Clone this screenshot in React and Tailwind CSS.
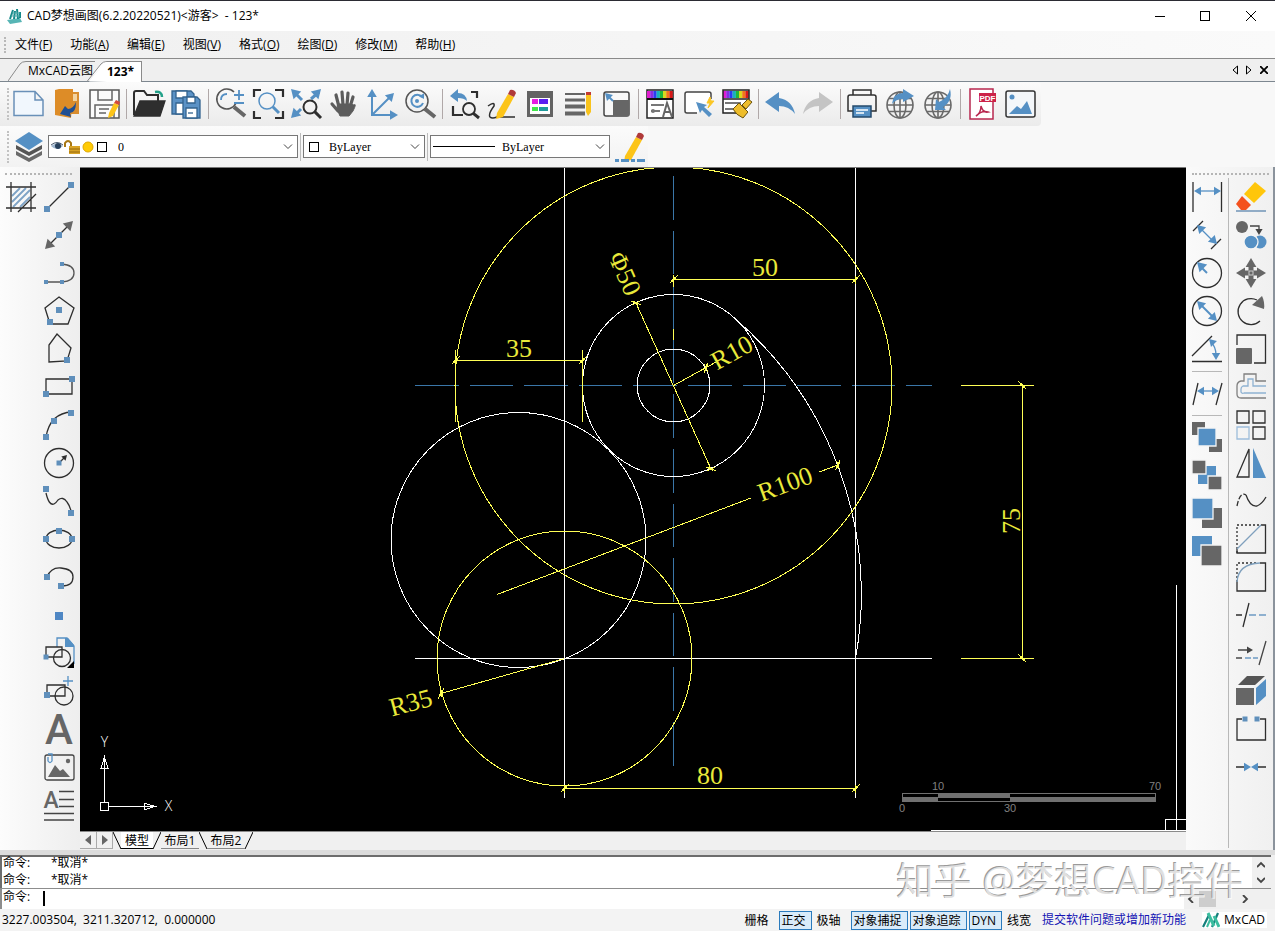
import React from 'react';

const BLUE = '#5590c4';
const GRAY = '#666666';
const DARK = '#2e2e2e';

// Arrow head with its tip on (x, y), turned by a degrees (0 = right)
const Head = ({ x, y, a = 0, s = 6, c = BLUE }) => (
  <path d={`M0 0L${-s} ${-s * 0.6}V${s * 0.6}Z`} fill={c} stroke="none" transform={`translate(${x} ${y}) rotate(${a})`} />
);

// Small square node
const Node = ({ x, y, s = 6, c = '#5f8fbb' }) => (
  <rect x={x - s / 2} y={y - s / 2} width={s} height={s} fill={c} stroke="none" />
);

const Glass = ({ x, y, r, hx, hy, c = DARK, hc = c, w = 1.5, hw = 3 }) => (
  <>
    <circle cx={x} cy={y} r={r} stroke={c} strokeWidth={w} />
    <path d={`M${x + r * 0.72} ${y + r * 0.72}L${hx} ${hy}`} stroke={hc} strokeWidth={hw} />
  </>
);

const Pencil = () => (
  <g stroke="none">
    <path d="M21 5L27 8L16 28L9 30L10 24Z" fill="#fcc419" />
    <path d="M21 5L23 1Q27 0 29 4L27 8Z" fill="#b03a3a" />
  </g>
);

const Spectrum = () => (
  <g stroke="none">
    {['#e01fd0', '#8a2be2', '#2b3cf0', '#18b0c0', '#1fb83a', '#d8d820', '#f07818', '#d81818'].map((c, i) => (
      <rect key={c} x={2 + i * 3.2} y="2" width="3.3" height="7" fill={c} />
    ))}
  </g>
);

const Globe = () => (
  <g stroke="#6a6a6a" strokeWidth="1.6">
    <circle cx="15" cy="16" r="13" />
    <ellipse cx="15" cy="16" rx="6" ry="13" />
    <path d="M15 3V29M2 16H28M4 9.500H26M4 22.500H26" />
  </g>
);

const icons = {
  blank: (
    <path d="M1 2.500H22L30 11V26.500H1ZM22 2.500V11H30" fill="#f1f7fd" stroke="#6990b8" strokeWidth="1.500" />
  ),
  open: (
    <g stroke="none">
      <path d="M20 3H28V25H20Z" fill="#d98d2e" />
      <path d="M22 5H26V12H22Z" fill="#f3d3a0" />
      <path d="M4 1L8 0H22V4L20 29L4 26Z" fill="#dd8c27" />
      <path d="M9 25L14 17L17 20Q22 20 25 13Q25 24 19 24L20 28Z" fill="#1f4f93" />
    </g>
  ),
  save: (
    <>
      <path d="M1 1H30V29H1Z" fill="#fbfbfb" stroke="#555" strokeWidth="1.500" />
      <path d="M9 1V11H23V1M6 29V16H25V29M10 20H20M10 24H17" stroke="#666" strokeWidth="1.500" />
      <path d="M25 14L30 16L24 27L19 29L20 24Z" fill="#fcc419" stroke="none" />
      <path d="M25 14L27 11L31 13L30 16Z" fill="#d34a3a" stroke="none" />
    </>
  ),
  folder: (
    <>
      <path d="M1 26V4Q1 2 3 2H11L14 6H25V12" stroke={DARK} strokeWidth="2" />
      <path d="M1 27L7 12H32L27 27Z" fill={DARK} stroke={DARK} />
      <path d="M22 3Q29 2 29 8" stroke="#23a28a" strokeWidth="2.500" />
    </>
  ),
  saveAll: (
    <>
      <path d="M1 2H20L23 5V25H1Z" fill="#5b92c6" stroke="#33638f" />
      <path d="M5 2H16V9H5ZM5 14H18V25H5Z" fill="#fff" stroke="#33638f" />
      <path d="M12 8H26L29 11V29H12Z" fill="#5b92c6" stroke="#33638f" />
      <path d="M16 8H24V14H16ZM15 19H26V29H15Z" fill="#fff" stroke="#33638f" />
      <path d="M17 24H22" stroke="#33638f" />
    </>
  ),
  zoomPm: (
    <>
      <path d="M19 3A10 10 0 1 0 21 14" stroke="#555" strokeWidth="1.600" />
      <path d="M19 18L30 27" stroke={GRAY} strokeWidth="4" />
      <path d="M24 1V11M19 6H29M19 14H29M6 11Q6 5 12 5" stroke={BLUE} strokeWidth="1.800" />
    </>
  ),
  zoomWin: (
    <>
      <path d="M1 8V1H8M22 1H30V8M30 22V29H22M8 29H1V22" stroke={DARK} strokeWidth="2.200" />
      <Glass x={14} y={12} r={8} hx={26} hy={24} c={BLUE} />
    </>
  ),
  zoomAll: (
    <>
      <path d="M3 3L11 11M28 3L20 10M3 27L10 20" stroke={BLUE} strokeWidth="3" />
      <Head x={0} y={0} a={225} s={9} />
      <Head x={30} y={0} a={315} s={9} />
      <Head x={0} y={29} a={135} s={9} />
      <Glass x={19} y={18} r={6.5} hx={30} hy={29} w={2} />
    </>
  ),
  hand: (
    <g stroke="#5c5c5c" strokeLinecap="round" strokeWidth="3.200">
      <path d="M7 6L10 18M13 3L14 16M19 4L18 16M24 8L21 18M3 15L9 22" />
      <path d="M9 15H21L25 16Q28 14 24 22L20 27H11L8 20Z" fill="#5c5c5c" strokeWidth="1" />
    </g>
  ),
  axes: (
    <>
      <path d="M5 4V26H27M5 26L24 7" stroke={BLUE} strokeWidth="2" />
      <Head x={5} y={0} a={270} s={8} />
      <Head x={31} y={26} s={8} />
      <Head x={27} y={4} a={315} s={8} />
    </>
  ),
  zoomRot: (
    <>
      <Glass x={12} y={12} r={11} hx={30} hy={28} c="#555" hc={GRAY} hw={4} />
      <path d="M17 8A6 6 0 1 0 18 14" stroke={BLUE} strokeWidth="2" />
      <circle cx="12" cy="12" r="2" fill={BLUE} stroke="none" />
      <Head x={19} y={10} a={60} s={5} />
    </>
  ),
  zoomPrev: (
    <>
      <path d="M1 7L9 0V4Q17 4 18 12Q15 9 9 9V13Z" fill={BLUE} stroke="none" />
      <path d="M22 3H28V9M4 17V26H14" stroke={DARK} strokeWidth="2.200" />
      <Glass x={20} y={20} r={6} hx={30} hy={29} w={1.8} />
    </>
  ),
  draw: (
    <>
      <path d="M1 17Q8 12 7 17Q1 25 3 28Q5 30 10 28H28" stroke={DARK} strokeWidth="1.500" />
      <Pencil />
    </>
  ),
  palette: (
    <g stroke="none">
      <rect x="2" y="2" width="26" height="26" fill="#636363" />
      <rect x="5" y="9" width="20" height="16" fill="#fff" />
      <path d="M7 10H13V15H7Z" fill="#e61fe0" />
      <path d="M14 10H23V15H14Z" fill="#5a1ff0" />
      <path d="M7 18H13V22H7Z" fill="#42e84a" />
      <path d="M14 18H23V22H14Z" fill="#1f9c9c" />
    </g>
  ),
  lines: (
    <>
      <path d="M2 5H22" stroke={GRAY} strokeWidth="2" />
      <path d="M2 11H22" stroke={GRAY} strokeWidth="3" />
      <path d="M2 17.500H22M2 24.500H22" stroke={GRAY} strokeWidth="4" />
      <path d="M23 6H28V23L25 27L23 23Z" fill="#f9c31c" stroke="none" />
      <path d="M23 3H28V6H23Z" fill="#c23a32" stroke="none" />
    </>
  ),
  corner: (
    <>
      <rect x="3" y="3" width="25" height="24" rx="2" fill="#f8f8f8" stroke="#444" strokeWidth="1.500" />
      <path d="M12 11H28V27H12Z" fill={GRAY} stroke="none" />
      <path d="M12 12L6 6" stroke={BLUE} strokeWidth="2" />
      <Head x={4} y={4} a={225} s={7} />
    </>
  ),
  textStyle: (
    <>
      <rect x="2" y="1" width="26" height="28" fill="#fff" stroke="#222" strokeWidth="1.500" />
      <Spectrum />
      <path d="M2 10H28" stroke="#111" strokeWidth="2" />
      <path d="M6 16H19M6 22H15" stroke="#777" strokeWidth="2" />
      <circle cx="8" cy="22" r="2" fill="#777" stroke="none" />
      <path d="M18 28L22 14L27 28M19 23H26" stroke={GRAY} strokeWidth="2" />
    </>
  ),
  pick: (
    <>
      <path d="M28 10V5Q28 3 26 3H4Q2 3 2 5V22Q2 24 4 24H14" fill="#fff" stroke="#444" strokeWidth="1.500" />
      <path d="M13 13L24 16L21 18L29 25L26 28L19 21L17 24Z" fill={BLUE} stroke="none" />
      <path d="M27 8L24 14H27L25 19L31 12H28Z" fill="#fbc624" stroke="#fbc624" strokeWidth="1" />
    </>
  ),
  match: (
    <>
      <rect x="2" y="2" width="26" height="22" fill="#fff" stroke="none" />
      <Spectrum />
      <path d="M16 24H2V1H28V14M2 10H28" stroke="#222" strokeWidth="1.500" />
      <path d="M4 14H20M4 20H14" stroke="#777" strokeWidth="2" />
      <path d="M12 20L18 14L27 23L22 29Q15 26 12 20Z" fill="#eebd2b" stroke="#6b5410" strokeWidth="1" />
      <path d="M21 16L27 10L31 13L25 20Z" fill="#eebd2b" stroke="#6b5410" strokeWidth="1" />
    </>
  ),
  undo: <path d="M0 13L14 3V9Q27 11 30 25Q24 17 14 17V23Z" fill={BLUE} stroke="none" />,
  redo: <path d="M30 13L16 3V9Q3 11 0 25Q6 17 16 17V23Z" fill="#c4c4c4" stroke="none" />,
  print: (
    <>
      <path d="M6 6V1H24V6M6 22H1V8Q1 6 3 6H27Q29 6 29 8V22H24" stroke={DARK} strokeWidth="1.500" />
      <rect x="6" y="17" width="18" height="11" fill={BLUE} stroke="#24496b" strokeWidth="1.500" />
      <path d="M9 21H21M9 24H17" stroke="#fff" strokeWidth="1.500" />
    </>
  ),
  globeOut: (
    <>
      <Globe />
      <path d="M7 15Q8 4 18 4V0L29 7L18 13V10Q11 10 7 15Z" fill={BLUE} stroke="none" />
    </>
  ),
  globeIn: (
    <>
      <Globe />
      <path d="M27 0Q30 12 20 18L23 21L12 21L13 10L16 13Q25 9 27 0Z" fill={BLUE} stroke="none" />
    </>
  ),
  pdf: (
    <>
      <rect x="3" y="0" width="23" height="30" fill="#fff" stroke="#b8274f" strokeWidth="1.500" />
      <rect x="12" y="4" width="17" height="9" fill="#cc2248" stroke="none" />
      <text x="20.500" y="11.500" textAnchor="middle" fontSize="8" fontWeight="700" fill="#fff" stroke="none">PDF</text>
      <path d="M9 27Q14 24 14 17Q16 24 21 23Q15 21 9 27Z" stroke="#b8274f" strokeWidth="1.500" />
    </>
  ),
  picture: (
    <>
      <rect x="1" y="2" width="29" height="26" rx="2" fill="#f4f7fa" stroke="#333" strokeWidth="1.500" />
      <circle cx="7" cy="8" r="2.500" fill={BLUE} stroke="none" />
      <path d="M4 25L12 17L16 20L22 12L27 25Z" fill={BLUE} stroke="none" />
    </>
  ),
  layers: (
    <g stroke="none">
      <path d="M2 19L15 26L28 19V23L15 30L2 23Z" fill="#6a6a6a" />
      <path d="M2 13L15 20L28 13V17L15 24L2 17Z" fill="#555" />
      <path d="M15 0L29 9L15 18L1 9Z" fill={BLUE} />
    </g>
  ),
  lineEdit: (
    <>
      <Pencil />
      <path d="M0 28.500H32" stroke={BLUE} strokeWidth="3" strokeDasharray="4 2 8 2" />
    </>
  ),
  hatch: (
    <>
      <g stroke="#7ea3c6" strokeWidth="1.800">
        <path d="M6 14L14 6M6 20L20 6M7 25L24 8M14 25L24 15" />
      </g>
      <path d="M0 5H30M0 26H30M5 0V30M25 0V30M12 30L30 12" />
    </>
  ),
  line: (
    <>
      <path d="M3 27L27 3" />
      <Node x={3} y={27} />
      <Node x={27} y={3} />
    </>
  ),
  xline: (
    <>
      <path d="M4 26L26 4" />
      <Head x={1} y={29} a={135} s={9} c={GRAY} />
      <Head x={29} y={1} a={315} s={9} c={GRAY} />
      <Node x={15} y={15} />
    </>
  ),
  pline: (
    <>
      <path d="M2 24H18Q30 23 30 15T18 6" stroke="#555" />
      <path d="M5 24H15" stroke="#f4f4f4" strokeWidth="2" strokeDasharray="0 1" />
      <Node x={2} y={24} s={4} />
      <Node x={18} y={24} s={4} />
      <Node x={18} y={6} s={4} />
    </>
  ),
  polygon: (
    <>
      <path d="M15 1L30 12L24 28H6L1 12Z" />
      <Node x={15} y={14} />
      <Node x={6} y={26} />
    </>
  ),
  wire: (
    <>
      <path d="M13 0L27 14L23 27L5 28V11Z" />
      <Node x={23} y={26} />
    </>
  ),
  rect: (
    <>
      <path d="M2 7H28V22H2Z" />
      <Node x={28} y={7} />
      <Node x={2} y={22} />
    </>
  ),
  arc: (
    <>
      <path d="M2 27Q6 3 28 2" />
      <Node x={2} y={27} />
      <Node x={10} y={11} />
      <Node x={27} y={3} />
    </>
  ),
  circle: (
    <>
      <circle cx="15" cy="15" r="14.500" />
      <path d="M15 15L20 10" />
      <Head x={23} y={7} a={315} s={5} c={DARK} />
      <Node x={15} y={15} s={5} />
    </>
  ),
  spline: (
    <>
      <path d="M2 7Q5 20 10 18Q12 17 14 14Q19 10 23 16Q26 20 27 25" />
      <Node x={2} y={3} />
      <Node x={27} y={27} />
    </>
  ),
  ellipse: (
    <>
      <ellipse cx="15" cy="15" rx="13" ry="9" />
      <Node x={2} y={15} />
      <Node x={28} y={15} />
      <Node x={15} y={7} />
    </>
  ),
  ellArc: (
    <>
      <path d="M3 15Q7 5 17 6Q29 7 29 15Q29 24 18 24" />
      <Node x={3} y={15} />
      <Node x={17} y={24} />
    </>
  ),
  point: <Node x={15} y={16} s={8} c="#4f87c4" />,
  block: (
    <>
      <path d="M13 9V0H23L30 8V26" stroke={BLUE} />
      <path d="M21 0H24L30 7V9H21Z" fill={BLUE} stroke="none" />
      <path d="M2 9H18V19H2Z" />
      <circle cx="18" cy="20" r="8.500" />
      <path d="M30 23V30H23Z" fill="#000" stroke="none" />
      <Node x={2} y={19} s={5} />
    </>
  ),
  insert: (
    <>
      <path d="M24 0V10M19 5H29" stroke={BLUE} />
      <path d="M3 9H21V20H3Z" />
      <circle cx="20" cy="20" r="9" />
      <Node x={3} y={19} />
    </>
  ),
  text: (
    <text x="15" y="30" textAnchor="middle" fontSize="42" fontWeight="500" fontFamily="Roboto, sans-serif" fill={GRAY} stroke="none">A</text>
  ),
  image: (
    <>
      <rect x="1" y="3" width="29" height="25" rx="2" stroke="#444" />
      <path d="M4 25L11 13L16 19L19 17L26 25Z" fill={GRAY} stroke="none" />
      <circle cx="24" cy="9" r="2.200" fill={GRAY} stroke="none" />
      <path d="M4 2H8V9Q6 12 4 9V5" stroke={BLUE} />
    </>
  ),
  mtext: (
    <>
      <text x="7" y="18" textAnchor="middle" fontSize="23" fontWeight="500" fontFamily="Roboto, sans-serif" fill={GRAY} stroke="none">A</text>
      <path d="M15 1.500H30M15 9.500H30M15 16.500H30M0 23.500H30M0 30H30" stroke="#444" />
    </>
  ),
  dimLin: (
    <>
      <path d="M1 0V30M29.500 0V30" />
      <path d="M5 9H25" stroke={BLUE} />
      <Head x={2} y={9} a={180} s={7} />
      <Head x={29} y={9} s={7} />
    </>
  ),
  dimAli: (
    <>
      <path d="M1 11L11 1M19 29L29 19" />
      <path d="M7 7L23 23" stroke={BLUE} />
      <Head x={5} y={5} a={225} s={8} />
      <Head x={25} y={24} a={45} s={8} />
    </>
  ),
  dimRad: (
    <>
      <circle cx="15" cy="15" r="14.500" />
      <path d="M15 15L8 8" stroke={BLUE} strokeWidth="2" />
      <Head x={5} y={4} a={225} s={9} />
    </>
  ),
  dimDia: (
    <>
      <circle cx="15" cy="15" r="14.500" />
      <path d="M7 7L22 22" stroke={BLUE} strokeWidth="2" />
      <Head x={5} y={5} a={225} s={8} />
      <Head x={25} y={25} a={45} s={8} />
    </>
  ),
  dimAng: (
    <>
      <path d="M0 22L20 2M0 27.500H30" />
      <path d="M19 8Q24 13 24 21" stroke={BLUE} />
      <Head x={17} y={5} a={225} s={7} />
      <Head x={24} y={26} a={90} s={7} />
    </>
  ),
  dimObl: (
    <>
      <path d="M6 5L1 27M30 5L24 27" />
      <path d="M8 13H24" stroke={BLUE} />
      <Head x={5} y={13} a={180} s={7} />
      <Head x={27} y={13} s={7} />
    </>
  ),
  order1: (
    <g stroke="none">
      <path d="M0 0H13V13H0ZM17 17H30V30H17Z" fill={GRAY} />
      <path d="M6 6H24V24H6Z" fill={BLUE} stroke="#f5f5f5" />
    </g>
  ),
  order2: (
    <g stroke="none">
      <path d="M6 6H24V24H6Z" fill={BLUE} />
      <path d="M0 0H14V14H0ZM16 16H30V30H16Z" fill={GRAY} stroke="#f5f5f5" />
    </g>
  ),
  order3: (
    <g stroke="none">
      <path d="M10 10H30V30H10Z" fill={GRAY} />
      <path d="M0 0H21V21H0Z" fill={BLUE} stroke="#f5f5f5" />
    </g>
  ),
  order4: (
    <g stroke="none">
      <path d="M0 0H20V20H0Z" fill={BLUE} />
      <path d="M9 9H30V30H9Z" fill={GRAY} stroke="#f5f5f5" />
    </g>
  ),
  erase: (
    <>
      <path d="M19 0L30 9L18 21L8 12Z" fill="#ffc60b" stroke="none" />
      <path d="M6 14L15 23L10 28H5L0 22Z" fill="#f4511e" stroke="none" />
      <path d="M0 29H30" stroke="#5b86ae" />
    </>
  ),
  copy: (
    <>
      <circle cx="6" cy="7" r="6" fill={GRAY} stroke="none" />
      <path d="M14 6H23V12" stroke="#444" />
      <Head x={23} y={15} a={90} s={6} c="#444" />
      <circle cx="24" cy="22" r="6.500" fill={BLUE} stroke="none" />
      <circle cx="15" cy="22" r="7" fill={BLUE} stroke="#f5f5f5" />
    </>
  ),
  move: (
    <>
      <path d="M15 5V25M5 15H25" stroke={GRAY} strokeWidth="5" />
      <Head x={15} y={0} a={270} s={9} c={GRAY} />
      <Head x={15} y={30} a={90} s={9} c={GRAY} />
      <Head x={0} y={15} a={180} s={9} c={GRAY} />
      <Head x={30} y={15} s={9} c={GRAY} />
      <rect x="13" y="13" width="4" height="4" fill="none" stroke="#ccc" strokeWidth="1" />
    </>
  ),
  rotate: (
    <>
      <path d="M21 4A13 13 0 1 0 24 25" />
      <path d="M26 0Q29 6 28 13L16 9Z" fill={GRAY} stroke="none" />
    </>
  ),
  scale: (
    <>
      <path d="M1 11V1H29.500V29H18" />
      <rect x="0" y="14" width="16" height="16" rx="1" fill={GRAY} stroke="none" />
    </>
  ),
  offset: (
    <g stroke="#808080">
      <path d="M30 9H20V2H8V9H5Q1 10 1 14V22Q1 26 5 26H30" />
      <path d="M30 14H17V7H12V14H7Q5 15 5 17V20Q6 22 8 21H30" stroke="#8fb2d2" />
    </g>
  ),
  array: (
    <>
      <path d="M1 1H13V13H1ZM17 1H29V13H17ZM17 17H29V29H17Z" />
      <path d="M1 17H13V29H1Z" stroke="#9dbddb" />
    </>
  ),
  mirror: (
    <>
      <path d="M13 1V29H1Z" />
      <path d="M17 0L30 30H17Z" fill={BLUE} stroke="none" />
    </>
  ),
  curve: (
    <>
      <path d="M1 20Q4 5 10 9" strokeDasharray="5 2" />
      <path d="M10 9Q14 21 21 20Q26 18 30 11" />
    </>
  ),
  chamfer: (
    <>
      <path d="M1 29V1H25" strokeDasharray="2 2" />
      <path d="M1 25V29H29.500V1H25" />
      <path d="M1 25L25 1" stroke="#7fa0bd" />
    </>
  ),
  fillet: (
    <>
      <path d="M1 20V1H20" strokeDasharray="2 2" />
      <path d="M1 20V29H29.500V1H24" />
      <path d="M1 20Q2 2 24 1" stroke="#7fa0bd" />
    </>
  ),
  trim: (
    <>
      <path d="M13 3L7 27M0 15H6" />
      <path d="M13 15H30" stroke="#6d9ac4" strokeDasharray="7 3" />
    </>
  ),
  extend: (
    <>
      <path d="M30 3L23 27M2 12H13" stroke="#444" />
      <Head x={17} y={12} s={6} c="#444" />
      <path d="M0 20H6" />
      <path d="M9 20H22" stroke="#6d9ac4" strokeDasharray="6 2" />
    </>
  ),
  explode: (
    <g stroke="none">
      <path d="M2 9L11 0H29L19 9Z" fill="#555" />
      <path d="M0 12H18V29H0Z" fill={GRAY} />
      <path d="M20 12L30 3V20L20 29Z" fill={BLUE} />
    </g>
  ),
  breakPt: (
    <>
      <path d="M6 5H1V26H29.500V5H24" />
      <Node x={9} y={5} s={5} />
      <Node x={21} y={5} s={5} />
    </>
  ),
  join: (
    <>
      <path d="M0 15H8M22 15H30" />
      <Head x={15} y={15} s={7} />
      <Head x={15} y={15} a={180} s={7} />
    </>
  ),
};

const Icon = ({ name }) => (
  <svg viewBox="0 0 30 30" className="w-[30px] h-[30px] overflow-visible" fill="none" stroke={DARK} strokeWidth="1.300" fontFamily="Liberation Sans, sans-serif">
    {icons[name]}
  </svg>
);

const Tool = ({ name }) => (
  <button aria-label={name} className="w-[38px] h-[38px] shrink-0 flex items-center justify-center hover:bg-sky-100">
    <Icon name={name} />
  </button>
);

// '|' stands for a separator
const topTools = [
  'blank', 'open', 'save', '|', 'folder', 'saveAll', '|', 'zoomPm', 'zoomWin', 'zoomAll', 'hand', 'axes', 'zoomRot', '|',
  'zoomPrev', 'draw', 'palette', 'lines', 'corner', '|', 'textStyle', 'pick', 'match', '|', 'undo', 'redo', '|',
  'print', 'globeOut', 'globeIn', '|', 'pdf', 'picture',
];
const drawTools = [
  'line', 'xline', 'pline', 'polygon', 'wire', 'rect', 'arc', 'circle', 'spline', 'ellipse', 'ellArc', 'point', 'block',
  'insert', 'text', 'image', 'mtext',
];
const dimTools = ['dimLin', 'dimAli', 'dimRad', 'dimDia', 'dimAng', '|', 'dimObl', '|', 'order1', 'order2', 'order3', 'order4'];
const editTools = [
  'erase', 'copy', 'move', 'rotate', 'scale', 'offset', 'array', 'mirror', 'curve', 'chamfer', 'fillet', 'trim', 'extend',
  'explode', 'breakPt', 'join',
];

const menus = [
  ['文件', 'F'], ['功能', 'A'], ['编辑', 'E'], ['视图', 'V'], ['格式', 'O'], ['绘图', 'D'], ['修改', 'M'], ['帮助', 'H'],
];

const Logo = () => (
  <svg viewBox="0 0 18 16" className="w-[18px] h-4" fill="none">
    <path d="M1 15L7 3M10 15L16 1" stroke="#15807c" strokeWidth="2.200" />
    <path d="M6 1L12 14M12 4L17 15" stroke="#3bbd9f" strokeWidth="3" />
    <path d="M5 15L8 8" stroke="#3bbd9f" strokeWidth="2" />
  </svg>
);

const AppIcon = () => (
  <svg viewBox="0 0 16 16" className="w-4 h-4" fill="none">
    <path d="M0 12L13 10L15 14L3 16Z" fill="#57b5b5" />
    <path d="M3 11L6 2M7 11L8 3M11 11L10 1M13 10L13 4" stroke="#168a8a" strokeWidth="2" />
    <path d="M5 5H13M4 8H13" stroke="#4aa9a9" />
  </svg>
);

function TitleBar() {
  return (
    <header className="h-[31px] border-t border-[#2b2b33] bg-white flex items-center pl-[7px] pr-px">
      <AppIcon />
      <h1 className="ml-1 text-xs whitespace-pre">CAD梦想画图(6.2.20220521)&lt;游客&gt;  - 123*</h1>
      <div className="ml-auto flex">
        <button aria-label="最小化" className="w-[45px] h-[29px] flex items-center justify-center">
          <span className="w-[10px] h-px bg-black" />
        </button>
        <button aria-label="最大化" className="w-[45px] h-[29px] flex items-center justify-center">
          <span className="w-[10px] h-[10px] border border-black" />
        </button>
        <button aria-label="关闭" className="w-[47px] h-[29px] flex items-center justify-center">
          <svg viewBox="0 0 10 10" className="w-[10px] h-[10px]" stroke="#000"><path d="M0 0L10 10M10 0L0 10" /></svg>
        </button>
      </div>
    </header>
  );
}

function MenuBar() {
  return (
    <nav className="h-7 border-b border-[#8a8a8a] bg-linear-to-r from-[#f0f0f0] to-[#fafafa] flex items-center pl-1">
      <span className="h-4 border-l-2 border-dotted border-[#b8b8b8]" />
      {menus.map(([label, key]) => (
        <button key={key} className="px-[9px] text-xs">
          {label}(<u>{key}</u>)
        </button>
      ))}
    </nav>
  );
}

function FileTabs() {
  return (
    <div className="h-[23px] border-b border-[#7d8790] bg-[#efefef] flex items-end pl-2">
      <button className="flex items-stretch h-5 text-xs">
        <svg viewBox="0 0 18 20" className="w-[18px] h-5" fill="none" stroke="#8a8a8a"><path d="M0 20L12 3Q14 0.500 18 0.500" /></svg>
        <span className="border-t border-[#8a8a8a] px-0.5 leading-[18px]">MxCAD云图</span>
      </button>
      <button className="flex items-stretch h-[21px] -mb-px -ml-2 text-xs font-bold relative">
        <svg viewBox="0 0 20 21" className="w-5 h-[21px]" fill="#fff" stroke="#8a8a8a"><path d="M0 20.500L14 3Q16 0.500 20 0.500" /><path d="M2 20.500L18 1.500L20 1V21Z" stroke="none" /></svg>
        <span className="bg-white border-t border-r border-[#8a8a8a] pr-[7px] leading-[19px]">123*</span>
      </button>
      <div className="ml-auto flex items-center h-full gap-2 pr-[7px]">
        <button aria-label="上一个"><svg viewBox="0 0 6 10" className="w-[6px] h-[10px]" fill="none" stroke="#000"><path d="M5.500 1V9L1 5Z" /></svg></button>
        <button aria-label="下一个"><svg viewBox="0 0 6 10" className="w-[6px] h-[10px]" fill="none" stroke="#000"><path d="M0.500 1V9L5 5Z" /></svg></button>
        <button aria-label="关闭标签"><svg viewBox="0 0 8 8" className="w-2 h-2" stroke="#000" strokeWidth="1.800"><path d="M0 0L8 8M8 0L0 8" /></svg></button>
      </div>
    </div>
  );
}

const Chevron = () => (
  <svg viewBox="0 0 10 6" className="w-[10px] h-[6px] mr-1 shrink-0" fill="none" stroke="#444"><path d="M1 0.500L5 4.500L9 0.500" /></svg>
);

const Sep = () => <span className="w-px h-7 bg-[#bcbcbc] shrink-0" />;

const comboText = "flex-1 min-w-0 h-full appearance-none bg-transparent text-xs outline-none font-['Liberation_Serif','Noto_Sans_CJK_SC',serif]";

function Toolbars() {
  return (
    <div className="bg-[#f8f8f8]">
      <div className="w-fit h-11 flex items-center pl-[7px] pr-0.5 rounded-r bg-linear-to-b from-[#fbfbfb] to-[#ebebeb]">
        <span className="h-8 border-l-2 border-dotted border-[#c2c2c2]" />
        {topTools.map((name, i) =>
          name === '|' ? (
            <span key={i} className="w-[6px] shrink-0 flex justify-center"><span className="w-px h-[30px] bg-[#b0a8a8]" /></span>
          ) : (
            <Tool key={name} name={name} />
          )
        )}
      </div>
      <div className="h-[41px] w-fit flex items-center gap-[2px] pl-[7px] bg-linear-to-b from-[#fbfbfb] to-[#f2f2f2]">
        <span className="h-8 border-l-2 border-dotted border-[#c2c2c2]" />
        <button aria-label="图层" className="w-[35px] flex justify-center"><Icon name="layers" /></button>
        <label aria-label="图层选择" className="w-[250px] h-[23px] bg-white border border-[#777] flex items-center pl-0.5">
          <svg viewBox="0 0 58 14" className="w-[58px] h-[14px] mr-[9px] shrink-0">
            <path d="M0 6Q6 1 12 6Q6 12 0 6Z" fill="#9fb6cf" />
            <path d="M0 5Q6 0 12 5" stroke="#46576b" fill="none" />
            <circle cx="7" cy="6" r="3" fill="#27405c" />
            <path d="M14 7V3Q17 -1 20 3V7" stroke="#a87815" strokeWidth="2" fill="none" />
            <path d="M18 6H29V14H18Z" fill="#d9a327" />
            <path d="M18 9H29M18 12H29" stroke="#94690f" />
            <circle cx="37" cy="7" r="5" fill="#ffcb05" stroke="#e0a800" />
            <rect x="46.500" y="2.500" width="9" height="9" fill="#fff" stroke="#000" />
          </svg>
          <select className={comboText}><option>0</option></select>
          <Chevron />
        </label>
        <Sep />
        <label aria-label="颜色" className="w-[122px] h-[23px] bg-white border border-[#777] flex items-center pl-[5px]">
          <span className="w-[10px] h-[10px] border border-black mr-[10px] shrink-0" />
          <select className={comboText}><option>ByLayer</option></select>
          <Chevron />
        </label>
        <Sep />
        <label aria-label="线型" className="w-[180px] h-[23px] bg-white border border-[#777] flex items-center pl-0.5">
          <span className="w-[62px] h-px bg-black mr-[7px] shrink-0" />
          <select className={comboText}><option>ByLayer</option></select>
          <Chevron />
        </label>
        <button aria-label="线型编辑" className="w-[36px] flex justify-center"><Icon name="lineEdit" /></button>
      </div>
    </div>
  );
}

// Oblique dimension tick
const Tick = ({ x, y, a = 0 }) => (
  <g transform={`translate(${x} ${y}) rotate(${a})`}>
    <path d="M-4 4L4 -4" />
    <path d="M-2 2L2 -2" strokeWidth="2" />
    <path d="M0 -4V4" />
  </g>
);

function Drawing() {
  return (
    <svg viewBox="80 168 1106 663" className="w-full h-full" fill="none" shapeRendering="crispEdges">
      <g stroke="#3a76a8" strokeDasharray="43.600 11">
        <path d="M415 385.500H932" />
        <path d="M673.500 176V767" />
      </g>
      <g stroke="#ffffff">
        <path d="M564.500 168V798M855.500 168V798M415 658.500H932" />
        <circle cx="673.500" cy="385.500" r="36.400" />
        <circle cx="673.500" cy="385.500" r="91" />
        <circle cx="518.500" cy="540" r="127.500" />
        <path d="M732 316A364 364 0 0 1 855.500 658.500" />
      </g>
      <g stroke="#ffff55">
        <circle cx="673.500" cy="385.500" r="218.500" />
        <circle cx="564.500" cy="658.500" r="127.500" />
        <path d="M455.500 350V422M582.500 350V422M455.500 360.500H582.500" />
        <path d="M673.500 279.500H855.500M673.500 275V287M673.500 329V340" />
        <path d="M636 303L711 469" />
        <path d="M673.500 385.500L718 361" />
        <path d="M497 594.500L751 498M819 472L838 465" />
        <path d="M564.500 658.500L441 693.500" />
        <path d="M961 385.500H1034M961 658.500H1034M1022.500 385.500V658.500" />
        <path d="M564.500 788.500H855.500" />
        <Tick x={455.5} y={360.5} />
        <Tick x={582.5} y={360.5} />
        <Tick x={673.5} y={279.5} />
        <Tick x={855.5} y={279.5} />
        <Tick x={636} y={303} a={66} />
        <Tick x={711} y={469} a={66} />
        <Tick x={706} y={368} a={-29} />
        <Tick x={838} y={465} a={-21} />
        <Tick x={441} y={693.5} a={-16} />
        <Tick x={1022.5} y={385.5} a={90} />
        <Tick x={1022.5} y={658.5} a={90} />
        <Tick x={564.5} y={788.5} />
        <Tick x={855.5} y={788.5} />
      </g>
      <g fill="#e9e93a" fontFamily="Liberation Serif, serif" fontSize="26" textAnchor="middle">
        <text x="519" y="357">35</text>
        <text x="765" y="276">50</text>
        <text x="710" y="784">80</text>
        <text transform="translate(1020 521) rotate(-90)">75</text>
        <text transform="translate(617 277) rotate(66)">Φ50</text>
        <text transform="translate(736 360) rotate(-29)">R10</text>
        <text transform="translate(788 492) rotate(-20)">R100</text>
        <text transform="translate(413 711) rotate(-15)">R35</text>
      </g>

      {/* UCS icon */}
      <g stroke="#fff">
        <path d="M100.500 802.500H108.500V810.500H100.500ZM104.500 802V758M108 806.500H154M104.500 757L101 768H108ZM155 806.500L144 803V810Z" />
      </g>
      <g fill="#fff" fontFamily="Open Sans, sans-serif" fontWeight="300" fontSize="14" textAnchor="middle">
        <text x="104.500" y="747">Y</text>
        <text x="168.500" y="811">X</text>
      </g>

      {/* scale bar */}
      <rect x="902.500" y="793.500" width="253" height="8" stroke="#707070" />
      <path d="M902 797H938V802H902ZM938 793H1010V798H938ZM1010 797H1156V802H1010Z" fill="#707070" />
      <g fill="#808080" fontFamily="Liberation Sans, sans-serif" fontSize="11" textAnchor="middle">
        <text x="938" y="790">10</text>
        <text x="1155" y="790">70</text>
        <text x="902" y="812">0</text>
        <text x="1010" y="812">30</text>
      </g>

      {/* crosshair */}
      <path d="M1176.500 585V831M931 830.500H1186M1165.500 831V819.500H1186" stroke="#fff" />
    </svg>
  );
}

const Slant = ({ back }) => (
  <svg viewBox="0 0 8 17" className="w-2 h-[17px]" fill="none" stroke="#000">
    <path d={back ? 'M0 0L8 17' : 'M8 0L0 17'} />
  </svg>
);

function LayoutTabs() {
  return (
    <div className="h-[19px] bg-[#f0f0f0] border-t border-[#8a8a8a] flex items-start text-xs leading-[17px]">
      <button aria-label="向左" className="w-[17px] h-[17px] border-r border-b border-[#aaa] flex items-center justify-center">
        <svg viewBox="0 0 6 10" className="w-[6px] h-[10px]" fill="#666"><path d="M6 0V10L0 5Z" /></svg>
      </button>
      <button aria-label="向右" className="w-4 h-[17px] border-r border-b border-[#aaa] flex items-center justify-center">
        <svg viewBox="0 0 6 10" className="w-[6px] h-[10px]" fill="#666"><path d="M0 0V10L6 5Z" /></svg>
      </button>
      <Slant back />
      <button className="h-[17px] w-[32px] bg-white border-b border-black">模型</button>
      <Slant />
      <button className="h-[17px] w-[38px] border-b border-[#888]">布局1</button>
      <Slant back />
      <button className="h-[17px] w-[38px] border-b border-[#888]">布局2</button>
      <Slant />
    </div>
  );
}

function RightPanel() {
  return (
    <aside className="w-[89px] shrink-0 border-r-2 border-[#8b939c] bg-linear-to-r from-[#fafafa] to-[#f0f0f0] pt-[6px] pl-0.5">
      <div className="h-[5px] mr-1 ml-1 border-t-2 border-dotted border-[#b5b5b5]" />
      <div className="flex">
        <div className="flex flex-col">
          {dimTools.map((name, i) =>
            name === '|' ? (
              <span key={i} className="h-[6px] flex items-center px-1"><span className="w-full h-px bg-[#b8b8b8]" /></span>
            ) : (
              <Tool key={name} name={name} />
            )
          )}
        </div>
        <div className="w-[6px] pl-[2px]"><div className="w-px h-[670px] bg-[#b8b8b8]" /></div>
        <div className="flex flex-col">
          {editTools.map((name) => <Tool key={name} name={name} />)}
        </div>
      </div>
    </aside>
  );
}

const Arrow = ({ d, label }) => (
  <button aria-label={label}>
    <svg viewBox="0 0 8 8" className="w-2 h-2" fill="none" stroke="#444" strokeWidth="1.800"><path d={d} /></svg>
  </button>
);

function CommandLine() {
  return (
    <section className="relative bg-[#f0f0f0] border-t-[5px] border-[#dcdcdc] text-xs">
      <div className="border-t-2 border-l-2 border-[#6d6d6d] mr-1 flex h-[33px]">
        <div className="flex-1 bg-white pl-px leading-[17px] flex flex-col justify-end">
          <p className="flex"><span className="w-12">命令:</span>*取消*</p>
          <p className="flex"><span className="w-12">命令:</span>*取消*</p>
        </div>
        <div className="w-[19px] pr-0.5 flex flex-col items-center justify-around">
          <Arrow label="向上滚动" d="M0 6L4 2L8 6" />
          <Arrow label="向下滚动" d="M0 2L4 6L8 2" />
        </div>
      </div>
      <div className="border-t border-l-2 border-[#8d8d8d] mr-1 flex h-[21px]">
        <label htmlFor="cmd" className="bg-white w-[41px] pl-px leading-4">命令:</label>
        <span className="bg-white"><span className="block w-0.5 h-[15px] mt-0.5 bg-black" /></span>
        <input id="cmd" className="flex-1 min-w-0 bg-white outline-none" />
        <div className="w-[68px] flex items-center justify-between px-[3px]">
          <Arrow label="向左滚动" d="M6 0L2 4L6 8" />
          <span className="w-[17px] h-4 ml-1 bg-[#cdcdcd] mr-auto" />
          <Arrow label="向右滚动" d="M2 0L6 4L2 8" />
        </div>
        <div className="w-[19px]" />
      </div>
      <p className="absolute right-[31px] top-0 text-[38px] leading-[50px] whitespace-pre text-white/70 [text-shadow:-1px_-1px_0_#9a9a9a] pointer-events-none">
        知乎 @梦想CAD控件
      </p>
    </section>
  );
}

const modes = [['栅格'], ['正交', true], ['极轴'], ['对象捕捉', true], ['对象追踪', true], ['DYN', true], ['线宽']];

function StatusBar() {
  return (
    <footer className="h-[22px] bg-[#f3f3f3] flex items-center text-xs pl-0.5 pr-2">
      <span className="whitespace-pre">3227.003504,  3211.320712,  0.000000</span>
      <div className="ml-auto flex items-center gap-[2px]">
        {modes.map(([label, on]) => (
          <button
            key={label}
            className={
              on
                ? 'h-[19px] pl-[2px] pr-[5px] border border-[#2b7bbd] bg-[#d9ebf9] leading-[17px]'
                : 'h-[19px] pl-[3px] pr-2 leading-[19px]'
            }
          >
            {label}
          </button>
        ))}
      </div>
      <a href="#feedback" className="ml-[3px] text-[#1414b4]">提交软件问题或增加新功能</a>
      <span className="ml-4 flex items-center gap-1 bg-white pr-0.5"><Logo />MxCAD</span>
    </footer>
  );
}

export default function App() {
  return (
    <div className="min-h-screen flex flex-col bg-[#f8f8f8] text-black overflow-hidden font-['Open_Sans','Noto_Sans_CJK_SC',sans-serif]">
      <TitleBar />
      <MenuBar />
      <FileTabs />
      <Toolbars />
      <div className="flex-1 flex">
        <aside className="w-20 shrink-0 pt-[6px] pl-0.5 bg-linear-to-r from-[#fcfcfc] to-[#eeeeee]">
          <div className="h-[5px] ml-[3px] mr-2 border-t-2 border-dotted border-[#b5b5b5]" />
          <div className="flex">
            <Tool name="hatch" />
            <div className="flex flex-col">
              {drawTools.map((name) => <Tool key={name} name={name} />)}
            </div>
          </div>
        </aside>
        <main className="flex-1 min-w-0 flex flex-col">
          <div className="flex-1 min-h-0 bg-black border-t border-[#777]">
            <Drawing />
          </div>
          <LayoutTabs />
        </main>
        <RightPanel />
      </div>
      <CommandLine />
      <StatusBar />
    </div>
  );
}
